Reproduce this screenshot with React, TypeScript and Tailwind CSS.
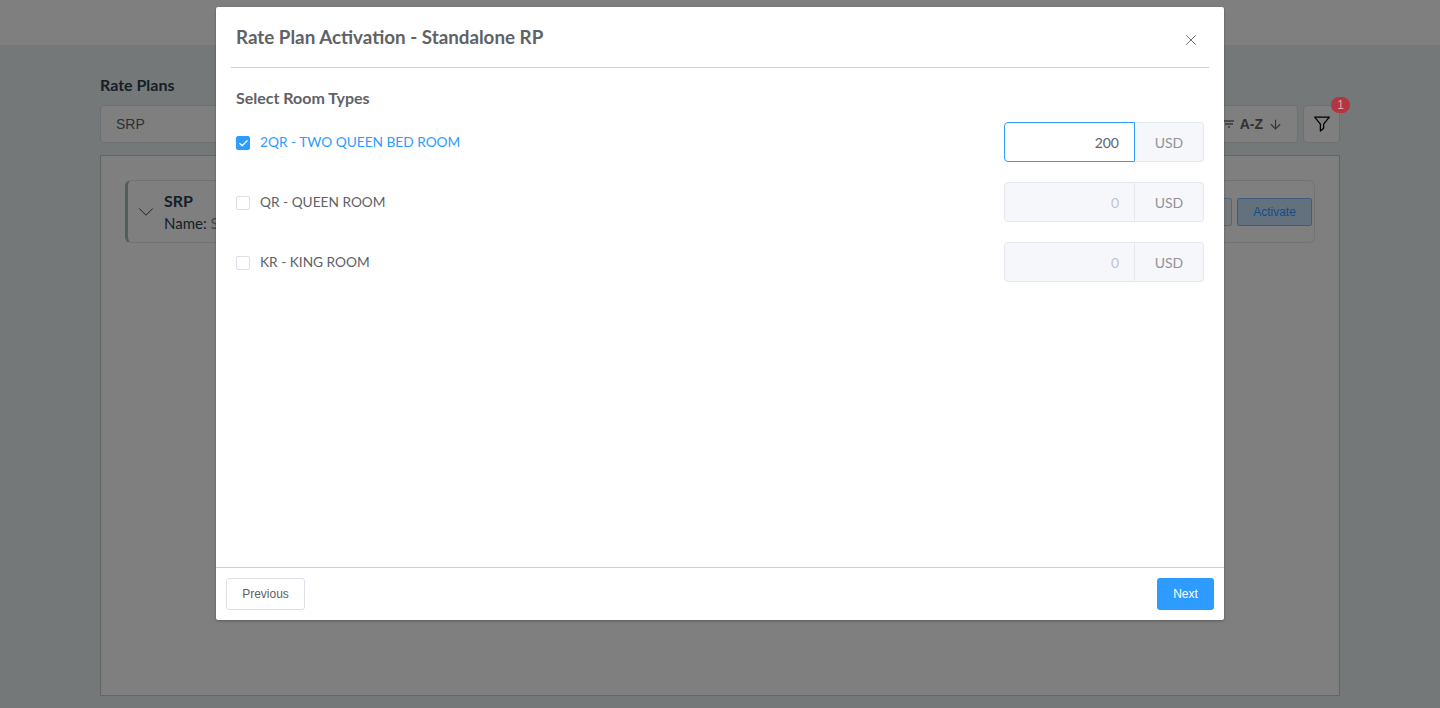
import { ChevronDown, X, Check, ArrowDown } from 'lucide-react'

const rooms = [
  { label: '2QR - TWO QUEEN BED ROOM', value: '200', active: true },
  { label: 'QR - QUEEN ROOM', value: '0', active: false },
  { label: 'KR - KING ROOM', value: '0', active: false },
]

function RoomRow({ label, value, active }: { label: string; value: string; active: boolean }) {
  return (
    <div className="flex items-center h-10 mb-5">
      <div
        className={`w-[14px] h-[14px] mt-[2px] rounded-[2px] border flex items-center justify-center mr-[10px] ${
          active ? 'bg-[#2e9bff] border-[#2e9bff]' : 'bg-white border-[#dcdfe6]'
        }`}
      >
        {active && <Check className="w-[11px] h-[11px] text-white" strokeWidth={2.6} />}
      </div>
      <span className={`flex-1 text-[13.7px] ${active ? 'text-[#2e9bff]' : 'text-[#606266]'}`}>{label}</span>
      <div className="flex w-[200px] h-10">
        <div
          className={`w-[131px] rounded-l-[4px] border flex items-center justify-end pr-[15px] text-[14px] ${
            active ? 'bg-white border-[#2e9bff] text-[#606266]' : 'bg-[#f5f7fa] border-[#e4e7ed] text-[#c0c4cc]'
          }`}
        >
          {value}
        </div>
        <div className="flex-1 rounded-r-[4px] border border-l-0 border-[#e4e7ed] bg-[#f5f7fa] flex items-center justify-center text-[14px] text-[#909399]">
          USD
        </div>
      </div>
    </div>
  )
}

export default function App() {
  return (
    <div className="relative h-[708px] overflow-hidden bg-[#ebf0f0] font-['Lato',sans-serif]">
      {/* Page behind the mask */}
      <div className="h-[45px] bg-white" />
      <div className="px-[100px]">
        <h2 className="mt-[30px] text-[16px] leading-5 font-bold text-[#2c3e50]">Rate Plans</h2>
        <div className="flex mt-[10px] gap-[5px] h-[38px]">
          <div className="flex-1 bg-white border border-[#dcdfe6] rounded-[4px] flex items-center px-[15px] text-[14px] text-[#606266] font-['Liberation_Sans',sans-serif]">
            SRP
          </div>
          <div className="w-[120px] bg-white border border-[#dcdfe6] rounded-[4px] flex items-center justify-end pr-[14px] text-[14px] font-bold text-[#606266] font-['Liberation_Sans',sans-serif]">
            <svg width="10" height="8" viewBox="0 0 10 8" className="mr-[6px]" stroke="#303133" strokeWidth="1.2">
              <path d="M0 1h10M1 4h8M4 7h2" />
            </svg>
            A-Z
            <ArrowDown className="w-[15px] h-[15px] ml-[5px]" strokeWidth={1.7} />
          </div>
          <div className="relative w-[37px] bg-white border border-[#dcdfe6] rounded-[4px] flex items-center justify-center">
            <svg width="16" height="16" viewBox="0 0 16 16" fill="none" stroke="#000" strokeWidth="1.3" strokeLinejoin="round">
              <path d="M.7 1.2h14.6L9.6 8.2v4L6.4 15V8.2z" />
            </svg>
            <span className="absolute z-10 -top-[9px] -right-[11px] w-[19px] h-4 rounded-full bg-[#b4343f] text-[#e3a6aa] text-[12px] leading-4 text-center font-['Liberation_Sans',sans-serif]">
              1
            </span>
          </div>
        </div>
        <div className="mt-3 h-[541px] bg-white border border-[#c8c8c8] px-6 pt-6">
          <div className="h-[63px] border border-[#e4e7ed] border-l-[3px] border-l-[#a5bdb2] rounded-[6px] flex items-center pl-[5px] pr-[2px]">
            <ChevronDown className="w-[26px] h-[26px] text-[#2c3e50] mr-[5px]" strokeWidth={0.9} />
            <div className="flex-1 pt-[1px]">
              <p className="text-[16px] leading-5 font-bold text-[#2c3e50]">SRP</p>
              <p className="text-[15px] leading-5 mt-[2px] text-[#2c3e50]">
                Name: <span className="text-[#909399]">SRP</span>
              </p>
            </div>
            <div className="w-[60px] h-7 mr-[5px] bg-[#ecf5ff] border border-[#a3d0fd] rounded-[2px]" />
            <div className="w-[75px] h-7 bg-[#c6e2ff] border border-[#7cbcff] rounded-[2px] flex items-center justify-center text-[12px] text-[#2e9bff] font-['Liberation_Sans',sans-serif]">
              Activate
            </div>
          </div>
        </div>
      </div>

      {/* Mask and dialog */}
      <div className="absolute inset-0 bg-black/50 pt-[7px]">
        <div className="mx-auto w-[1008px] h-[613px] bg-white rounded-[2px] shadow-[0_1px_3px_rgba(0,0,0,0.3)] flex flex-col relative z-20">
          <div className="relative mx-[15px] h-[61px] border-b border-[#cfcfd1] px-[5px] pt-[17px]">
            <h1 className="text-[18.8px] leading-[26px] font-bold text-[#606266]">Rate Plan Activation - Standalone RP</h1>
            <X className="absolute right-[9px] top-[24px] w-[18px] h-[18px] text-[#606266]" strokeWidth={1.2} />
          </div>
          <div className="flex-1 px-5 pt-[20px]">
            <h3 className="text-[16px] leading-5 font-bold text-[#606266] mb-[14px]">Select Room Types</h3>
            {rooms.map(r => (
              <RoomRow key={r.label} {...r} />
            ))}
          </div>
          <div className="h-[53px] border-t border-[#cfcfd1] flex items-center justify-between px-[10px] font-['Liberation_Sans',sans-serif]">
            <button className="w-[79px] h-8 bg-white border border-[#dcdfe6] rounded-[3px] text-[12px] text-[#606266]">
              Previous
            </button>
            <button className="w-[57px] h-8 bg-[#2e9bff] rounded-[3px] text-[12px] text-white">Next</button>
          </div>
        </div>
      </div>
    </div>
  )
}
